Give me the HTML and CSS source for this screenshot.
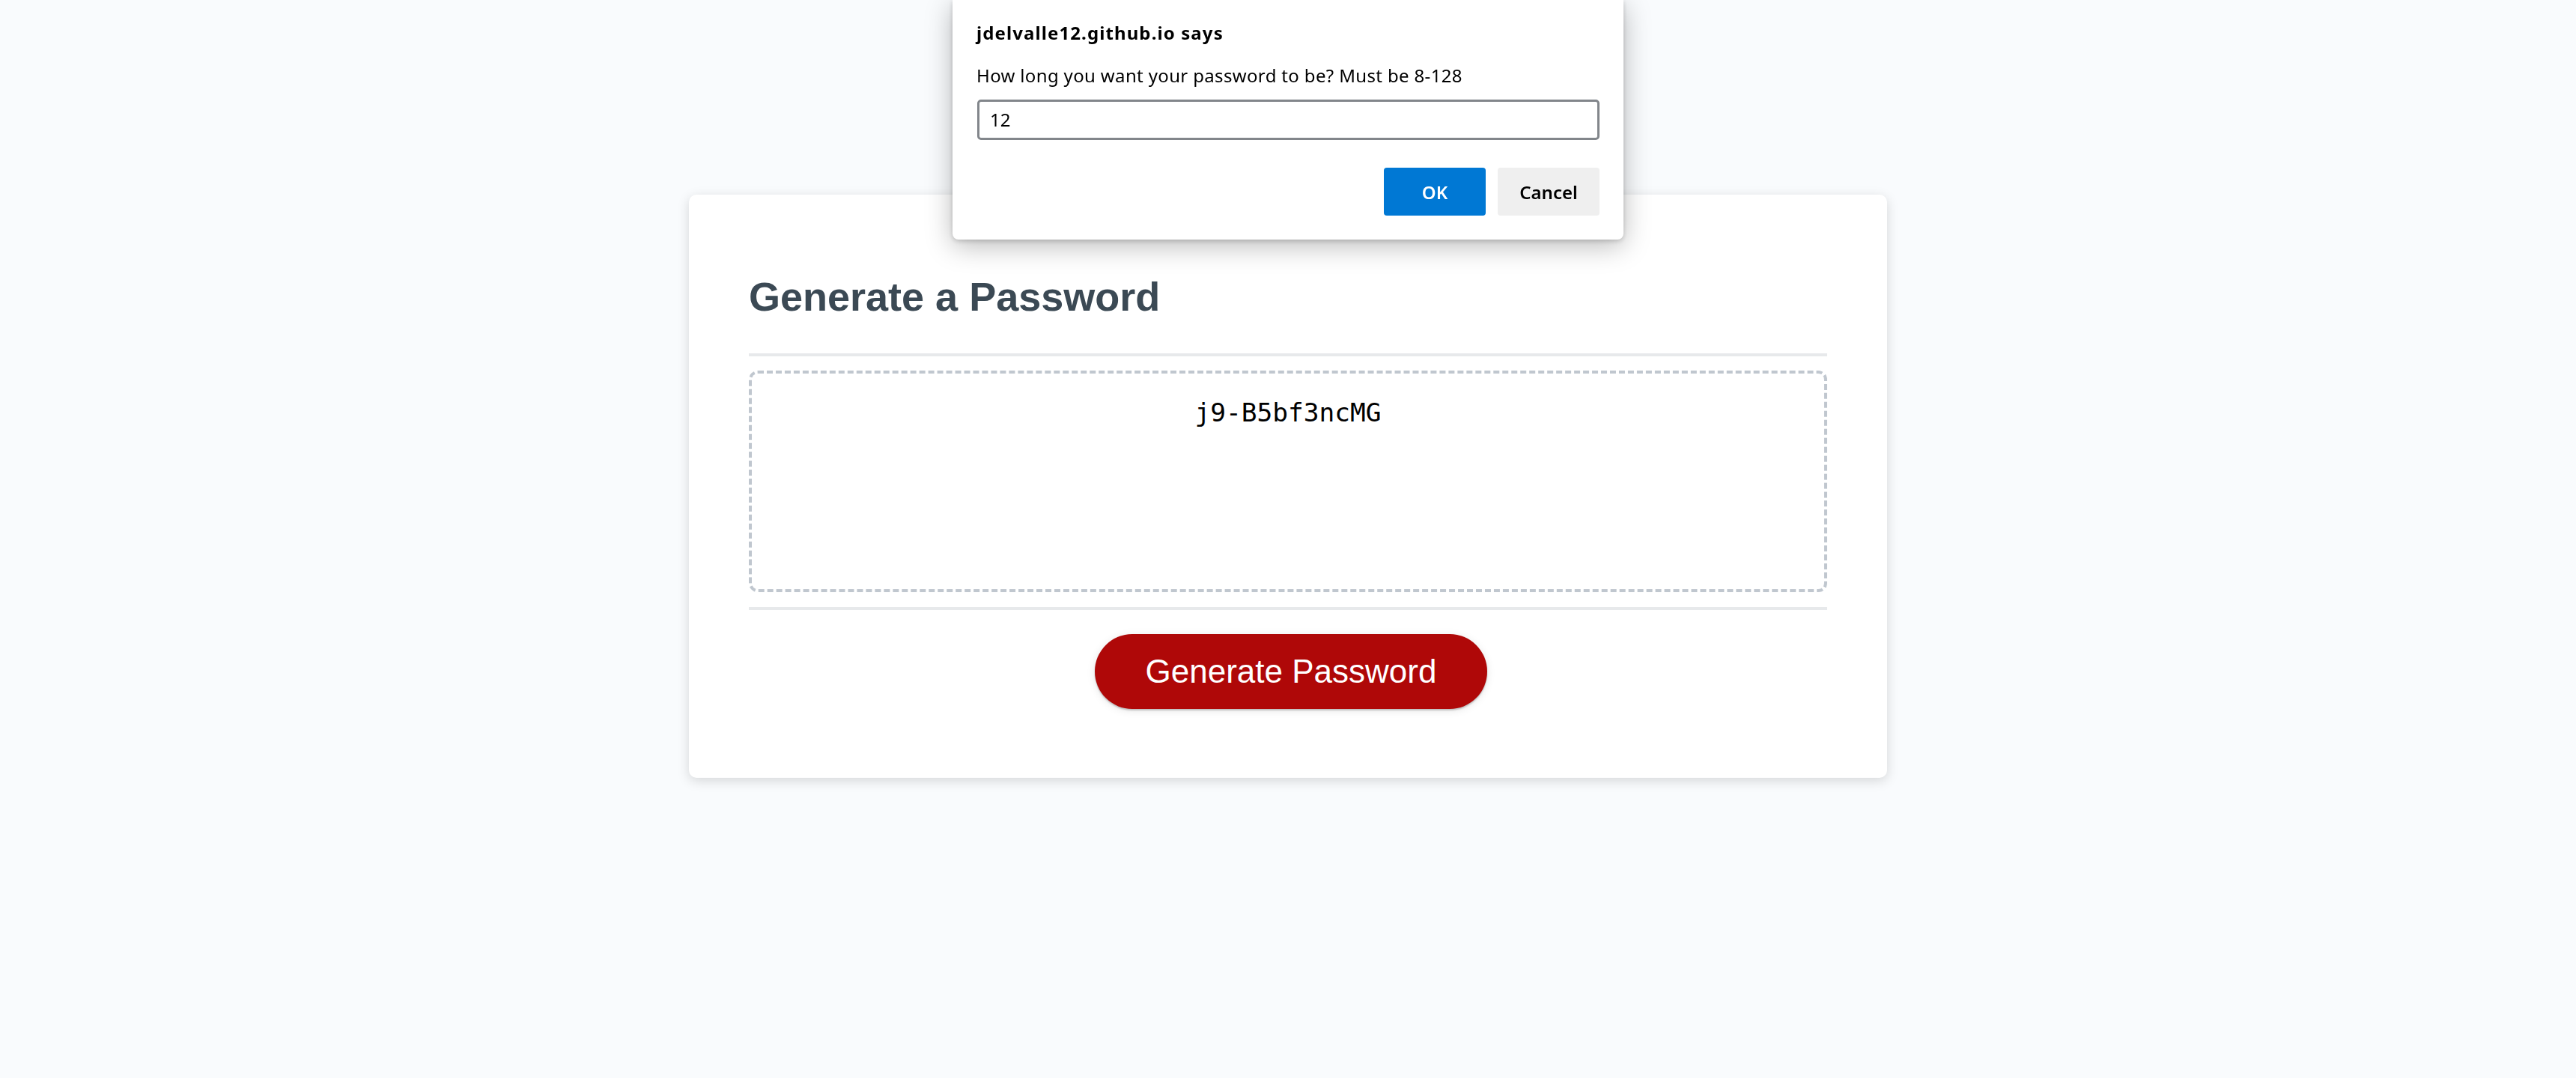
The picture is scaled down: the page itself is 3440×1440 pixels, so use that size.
FILE: index.html
```html
<!DOCTYPE html>
<html lang="en">
<head>
<meta charset="utf-8">
<title>Password Generator</title>
<link rel="stylesheet" href="styles.css">
</head>
<body>
<div class="wrapper">
  <header class="page-header">
    <h1 class="page-title">Password Generator</h1>
  </header>
  <div class="card">
    <div class="card-header">
      <h2 class="card-title">Generate a Password</h2>
    </div>
    <div class="card-body">
      <textarea readonly class="password" aria-label="Generated Password">j9-B5bf3ncMG</textarea>
    </div>
    <div class="card-footer">
      <button class="btn">Generate Password</button>
    </div>
  </div>
</div>

<div class="dialog" role="dialog">
  <div class="dialog-title">jdelvalle12.github.io says</div>
  <div class="dialog-message">How long you want your password to be? Must be 8-128</div>
  <div class="dialog-input">12</div>
  <div class="dialog-actions">
    <span class="dlg-btn dlg-ok">OK</span>
    <span class="dlg-btn dlg-cancel">Cancel</span>
  </div>
</div>
</body>
</html>
```

FILE: styles.css
```css
*, *::before, *::after {
  box-sizing: border-box;
}

html, body {
  margin: 0;
  padding: 0;
}

body {
  font-family: "Liberation Sans", Arial, sans-serif;
  background-color: #f9fbfd;
  min-height: 1440px;
}

.wrapper {
  padding: 76px 40px 0;
}

.page-header {
  text-align: center;
  padding: 0 40px 40px;
  color: hsl(206, 17%, 28%);
}

.page-title {
  margin: 35px 0;
  font-size: 64px;
  line-height: 74px;
}

.card {
  background-color: #fff;
  border-radius: 10px;
  box-shadow: rgba(0, 0, 0, 0.15) 0 4px 16px 0;
  color: hsl(206, 17%, 28%);
  font-size: 36px;
  margin: 0 auto;
  max-width: 1600px;
  padding: 60px 80px;
}

.card-title {
  font-size: 54px;
  line-height: 62px;
  margin: 44.8px 0;
  font-weight: bold;
}

.card-header::after {
  content: " ";
  display: block;
  width: 100%;
  background: #e7e9eb;
  height: 4px;
}

.card-body {
  min-height: 200px;
}

.password {
  -webkit-appearance: none;
  appearance: none;
  display: block;
  width: 100%;
  height: 296px;
  margin: 19px 0 20px;
  padding: 30px 30px 170px;
  border: 4px dashed #c0c7cf;
  border-radius: 12px;
  font-family: "DejaVu Sans Mono", "Liberation Mono", monospace;
  font-size: 34.5px;
  line-height: 44px;
  color: #000;
  background: #fff;
  text-align: center;
  resize: none;
  overflow: hidden;
  outline: none;
}

.card-footer {
  text-align: center;
}

.card-footer::before {
  content: " ";
  display: block;
  width: 100%;
  background: #e7e9eb;
  height: 4px;
}

.card-footer::after {
  content: " ";
  display: block;
  clear: both;
}

.btn {
  border: none;
  background-color: hsl(360, 91%, 36%);
  border-radius: 50px;
  box-shadow: rgba(0, 0, 0, 0.1) 0 2px 12px 0, rgba(0, 0, 0, 0.2) 0 2px 2px 0;
  color: #fff;
  display: inline-block;
  font-family: "Liberation Sans", Arial, sans-serif;
  font-size: 44px;
  line-height: 44px;
  margin: 32px 32px 32px 40px;
  padding: 28px 68px;
  text-align: center;
  cursor: pointer;
}

/* Browser prompt dialog */
.dialog {
  position: fixed;
  top: 0;
  left: 50%;
  margin-left: -448px;
  width: 896px;
  height: 320px;
  background: #fff;
  border-radius: 0 0 8px 8px;
  box-shadow: 0 8px 36px rgba(0, 0, 0, 0.28), 0 2px 6px rgba(0, 0, 0, 0.18);
  padding: 28px 32px 32px;
  font-family: "Noto Sans", "Open Sans", sans-serif;
  color: #000;
  display: flex;
  flex-direction: column;
  z-index: 10;
}

.dialog-title {
  font-size: 24px;
  font-weight: bold;
  letter-spacing: 1.1px;
  line-height: 32px;
  height: 32px;
}

.dialog-message {
  margin-top: 25px;
  font-size: 24px;
  letter-spacing: 0.35px;
  line-height: 32px;
  height: 32px;
}

.dialog-input {
  margin-top: 16px;
  margin-left: 1px;
  height: 54px;
  border: 3px solid #82868b;
  border-radius: 5px;
  padding: 0 14px;
  font-size: 24px;
  line-height: 48px;
}

.dialog-actions {
  margin-top: 37px;
  display: flex;
  justify-content: flex-end;
  gap: 16px;
}

.dlg-btn {
  width: 136px;
  height: 64px;
  border-radius: 4px;
  font-size: 24px;
  font-weight: 600;
  display: flex;
  align-items: center;
  justify-content: center;
}

.dlg-ok {
  background: #0078d4;
  color: #fff;
}

.dlg-cancel {
  background: #efefef;
  color: #000;
}
```
